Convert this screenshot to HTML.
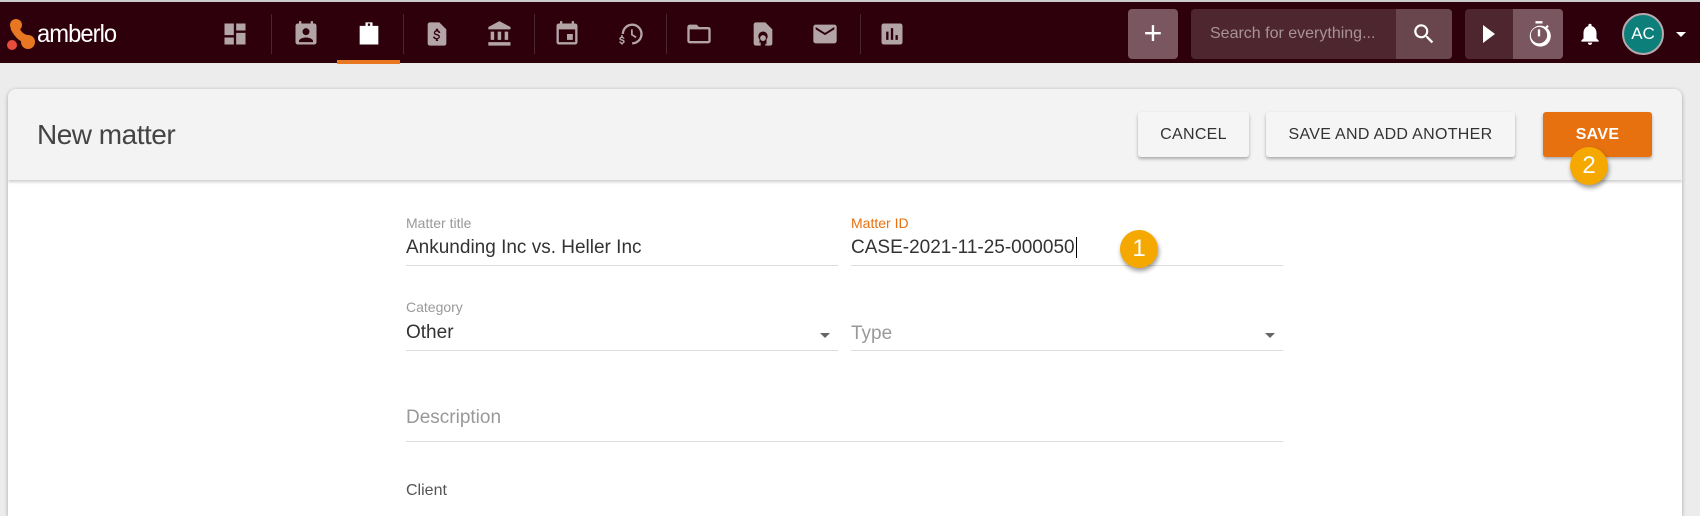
<!DOCTYPE html>
<html><head><meta charset="utf-8"><style>
*{box-sizing:border-box;margin:0;padding:0}
html{width:1700px;height:516px;overflow:hidden}
body{width:1700px;height:516px;overflow:hidden;background:#ececec;font-family:"Liberation Sans",sans-serif;position:relative}
.nav{position:absolute;left:0;top:0;width:1700px;height:63px;background:#2d000c;border-top:2px solid #ccc}
.ic{position:absolute;top:18px;width:28px;height:28px;fill:#b3a4a8}
.sep{position:absolute;top:12px;width:1px;height:40px;background:#4a2630}
.card{position:absolute;left:8px;top:89px;width:1674px;height:427px;background:#fff;border-radius:8px 8px 0 0;box-shadow:0 1px 4px rgba(0,0,0,.3);overflow:hidden}
.hdr{height:91px;background:#f3f3f3;box-shadow:0 2px 3px rgba(0,0,0,.2);position:relative}
.btn{position:absolute;top:23px;height:45px;background:#f5f5f5;border-radius:3px;box-shadow:0 2px 3px rgba(0,0,0,.3);font-size:16px;color:#333;letter-spacing:.3px;display:flex;align-items:center;justify-content:center}
.lbl{position:absolute;font-size:14px;color:#999}
.val{position:absolute;font-size:19px;color:#333}
.ln{position:absolute;height:1px;background:#ddd}
.badge{position:absolute;width:38px;height:38px;border-radius:50%;background:#f5a900;color:#fff;font-size:24px;display:flex;align-items:center;justify-content:center;box-shadow:1px 3px 5px rgba(0,0,0,.4)}
.car{position:absolute;width:0;height:0;border-left:5px solid transparent;border-right:5px solid transparent;border-top:5px solid #666}
</style></head><body>
<div class="nav">
 <svg style="position:absolute;left:6px;top:15px" width="30" height="36" viewBox="0 0 30 36"><circle cx="10" cy="8" r="6" fill="#e87722"/><path d="M8 10 Q14 22 22 22" stroke="#e87722" stroke-width="8" fill="none"/><circle cx="22" cy="25" r="7" fill="#e87722"/><circle cx="6" cy="28" r="5" fill="#e74c3c"/></svg>
 <div style="position:absolute;left:37px;top:18px;color:#fff;font-size:25px;letter-spacing:-1px;transform:scaleX(.95);transform-origin:left">amberlo</div>
 <svg class="ic" style="left:221px" viewBox="0 0 24 24"><path d="M3 13h8V3H3zm0 8h8v-6H3zm10 0h8V11h-8zm0-18v6h8V3z"/></svg>
 <div class="sep" style="left:271px"></div>
 <svg class="ic" style="left:292px" viewBox="0 0 24 24"><path d="M19 3h-1V1h-2v2H8V1H6v2H5a2 2 0 00-2 2v14a2 2 0 002 2h14a2 2 0 002-2V5a2 2 0 00-2-2zm-7 4a3 3 0 110 6 3 3 0 010-6zm6 12H6v-1c0-2 4-3 6-3s6 1 6 3z"/></svg>
 <svg class="ic" style="left:355px;fill:#fff" viewBox="0 0 24 24"><path d="M9 2h6v3h5v16H4V5h5zm2 1v2h2V3z"/></svg>
 <div style="position:absolute;left:337px;top:58px;width:63px;height:4px;background:#e87722"></div>
 <div class="sep" style="left:403px"></div>
 <svg class="ic" style="left:423px" viewBox="0 0 24 24"><path d="M14 2H6a2 2 0 00-2 2v16a2 2 0 002 2h12a2 2 0 002-2V8zm-1 16h-2v-1.5c-1.3-.2-2.3-1-2.5-2.3h1.6c.1.8.8 1.3 1.9 1.3 1.2 0 1.4-.6 1.4-1 0-.5-.3-1-1.6-1.3-1.5-.4-2.5-1-2.5-2.3 0-1.1.9-1.8 1.7-2V7.5h2V9c1.2.3 1.8 1.2 1.8 2.1h-1.6c0-.7-.4-1.2-1.4-1.2-.9 0-1.4.4-1.4 1 0 .5.4.8 1.6 1.1s2.5.8 2.5 2.4c0 1.1-.8 1.8-2 2z"/></svg>
 <svg class="ic" style="left:486px" viewBox="0 0 24 24"><path d="M4 10v7h3v-7zm6 0v7h3v-7zM2 22h19v-3H2zm14-12v7h3v-7zM11.5 1L2 6v2h19V6z"/></svg>
 <div class="sep" style="left:534px"></div>
 <svg class="ic" style="left:553px" viewBox="0 0 24 24"><path d="M17 12h-5v5h5zM16 1v2H8V1H6v2H5a2 2 0 00-2 2v14a2 2 0 002 2h14a2 2 0 002-2V5a2 2 0 00-2-2h-1V1zm3 18H5V8h14z"/></svg>
 <svg class="ic" style="left:617px" viewBox="0 0 24 24"><path d="M13 3a9 9 0 00-9 9h2a7 7 0 117 7v2a9 9 0 000-18zm-1 5v5l4 2.5.8-1.3-3.3-2V8zM5 13H3.5v1.2C2.6 14.5 2 15.2 2 16c0 1 .8 1.5 2 1.8 1 .2 1.2.5 1.2.8s-.3.6-1 .6-1-.3-1.1-.8H1.8c.1 1 .8 1.6 1.7 1.8V21H5v-.8c.9-.2 1.6-.8 1.6-1.7 0-1.2-1-1.6-2-1.9-.9-.2-1.2-.4-1.2-.7s.3-.5.8-.5c.6 0 .9.3.9.7h1.3c0-.8-.5-1.4-1.4-1.6z"/></svg>
 <div class="sep" style="left:666px"></div>
 <svg class="ic" style="left:685px" viewBox="0 0 24 24"><path d="M20 6h-8l-2-2H4a2 2 0 00-2 2v12a2 2 0 002 2h16a2 2 0 002-2V8a2 2 0 00-2-2zm0 12H4V8h16z"/></svg>
 <svg class="ic" style="left:749px" viewBox="0 0 24 24"><path d="M14 2H6a2 2 0 00-2 2v16a2 2 0 002 2h4v-3l-1 1v-3.5a4 4 0 116 0V21l-1-1v2h4a2 2 0 002-2V8zm-2 11a2.5 2.5 0 100 5 2.5 2.5 0 000-5z"/></svg>
 <svg class="ic" style="left:811px" viewBox="0 0 24 24"><path d="M20 4H4a2 2 0 00-2 2v12a2 2 0 002 2h16a2 2 0 002-2V6a2 2 0 00-2-2zm0 4l-8 5-8-5V6l8 5 8-5z"/></svg>
 <div class="sep" style="left:860px"></div>
 <svg class="ic" style="left:878px" viewBox="0 0 24 24"><path d="M19 3H5a2 2 0 00-2 2v14a2 2 0 002 2h14a2 2 0 002-2V5a2 2 0 00-2-2zM9 17H7v-7h2zm4 0h-2V7h2zm4 0h-2v-4h2z"/></svg>
 <div style="position:absolute;left:1128px;top:7px;width:50px;height:50px;background:#7a5760;border-radius:4px;color:#fff;font-size:32px;text-align:center;line-height:48px">+</div>
 <div style="position:absolute;left:1191px;top:7px;width:261px;height:50px;background:#4e2630;border-radius:4px"></div>
 <div style="position:absolute;left:1396px;top:7px;width:56px;height:50px;background:#69464e;border-radius:0 4px 4px 0"></div>
 <div style="position:absolute;left:1210px;top:23px;color:#a89298;font-size:16px">Search for everything...</div>
 <svg style="position:absolute;left:1411px;top:19px" width="26" height="26" viewBox="0 0 24 24" fill="#fff"><path d="M15.5 14h-.8l-.3-.3A6.5 6.5 0 109.5 16a6.5 6.5 0 004.2-1.6l.3.3v.8l5 5 1.5-1.5zm-6 0a4.5 4.5 0 110-9 4.5 4.5 0 010 9z"/></svg>
 <div style="position:absolute;left:1465px;top:7px;width:98px;height:50px;background:#4e2630;border-radius:4px"></div>
 <div style="position:absolute;left:1513px;top:7px;width:50px;height:50px;background:#7a5760;border-radius:0 4px 4px 0"></div>
 <div style="position:absolute;left:1483px;top:23px;border-top:9px solid transparent;border-bottom:9px solid transparent;border-left:12px solid #fff"></div>
 <svg style="position:absolute;left:1525px;top:17px" width="28" height="30" viewBox="0 0 24 24" fill="#fff"><path d="M9 1h6v2H9zm10 6l1.4-1.4-1.4-1.4L17.6 6A9 9 0 1019 7zm-7 13a7 7 0 110-14 7 7 0 010 14zm-1-12h2v6h-2z"/></svg>
 <svg style="position:absolute;left:1577px;top:18px" width="26" height="28" viewBox="0 0 24 24" fill="#fff"><path d="M12 22a2 2 0 002-2h-4a2 2 0 002 2zm6-6v-5c0-3-1.6-5.6-4.5-6.3V4a1.5 1.5 0 00-3 0v.7C7.6 5.4 6 8 6 11v5l-2 2v1h16v-1z"/></svg>
 <div style="position:absolute;left:1622px;top:11px;width:42px;height:42px;border-radius:50%;background:#0d7f7a;border:2px solid #b9a9ad;color:#fff;font-size:17px;text-align:center;line-height:38px">AC</div>
 <div style="position:absolute;left:1676px;top:30px;border-left:5px solid transparent;border-right:5px solid transparent;border-top:5px solid #fff"></div>
</div>
<div class="card">
 <div class="hdr">
  <div style="position:absolute;left:29px;top:30px;font-size:28px;color:#444;letter-spacing:-.5px">New matter</div>
  <div class="btn" style="left:1130px;width:111px">CANCEL</div>
  <div class="btn" style="left:1258px;width:249px">SAVE AND ADD ANOTHER</div>
  <div class="btn" style="left:1535px;width:109px;background:#e8710f;color:#fff;font-weight:bold">SAVE</div>
 </div>
</div>
<div class="badge" style="left:1570px;top:147px">2</div>
<div class="lbl" style="left:406px;top:215px">Matter title</div>
<div class="val" style="left:406px;top:237px">Ankunding Inc vs. Heller Inc</div>
<div class="ln" style="left:406px;top:265px;width:432px"></div>
<div class="lbl" style="left:851px;top:215px;color:#e8710f">Matter ID</div>
<div class="val" style="left:851px;top:237px">CASE-2021-11-25-000050<span style="border-left:1px solid #000;margin-left:1px"></span></div>
<div class="ln" style="left:851px;top:265px;width:432px"></div>
<div class="badge" style="left:1120px;top:230px">1</div>
<div class="lbl" style="left:406px;top:299px">Category</div>
<div class="val" style="left:406px;top:322px">Other</div>
<div class="car" style="left:820px;top:333px"></div>
<div class="ln" style="left:406px;top:350px;width:432px"></div>
<div class="val" style="left:851px;top:323px;color:#999">Type</div>
<div class="car" style="left:1265px;top:333px"></div>
<div class="ln" style="left:851px;top:350px;width:432px"></div>
<div class="val" style="left:406px;top:407px;color:#999">Description</div>
<div class="ln" style="left:406px;top:441px;width:877px"></div>
<div style="position:absolute;left:406px;top:482px;font-size:16px;color:#555">Client</div>
</body></html>
